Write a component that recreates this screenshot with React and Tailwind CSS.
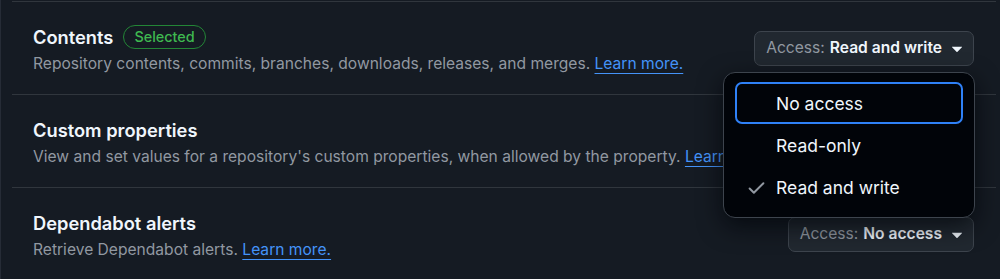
import React from "react";

const FONT = { fontFamily: "Inter, 'Noto Sans', 'Liberation Sans', sans-serif" };

function Caret() {
  return (
    <svg viewBox="0 0 16 16" width="22" height="22" fill="#f0f6fc" className="shrink-0">
      <path d="m4.427 7.427 3.396 3.396a.25.25 0 0 0 .354 0l3.396-3.396A.25.25 0 0 0 11.396 7H4.604a.25.25 0 0 0-.177.427Z" />
    </svg>
  );
}

function Check() {
  return (
    <svg viewBox="0 0 16 16" width="21" height="21" fill="#9198a1" className="shrink-0">
      <path d="M13.78 4.22a.75.75 0 0 1 0 1.06l-7.25 7.25a.75.75 0 0 1-1.06 0L2.22 9.28a.751.751 0 0 1 .018-1.042.751.751 0 0 1 1.042-.018L6 10.94l6.72-6.72a.75.75 0 0 1 1.06 0Z" />
    </svg>
  );
}

function AccessButton({ value }) {
  return (
    <button className="h-[35px] flex items-center pl-[11px] pr-[5px] rounded-[7px] border border-[#3d444d] bg-[#212830] text-[15.6px] whitespace-nowrap">
      <span className="text-[#9198a1]">Access:</span>
      <span className="ml-[5px] font-semibold text-[#f0f6fc]">{value}</span>
      <span className="ml-[4px]"><Caret /></span>
    </button>
  );
}

function Menu() {
  const items = [
    { label: "No access", focus: true },
    { label: "Read-only" },
    { label: "Read and write", checked: true },
  ];
  return (
    <div className="absolute right-[-1px] top-full mt-[6px] w-[252px] rounded-[12px] border border-[#3d444d] bg-[#010409] px-[11px] py-[9px] shadow-[0_8px_24px_rgba(1,4,9,0.7)] z-10">
      {items.map((it) => (
        <div
          key={it.label}
          className={
            "h-[42px] flex items-center pl-[9px] rounded-[7px] border-2 " +
            (it.focus ? "border-[#2f81f7]" : "border-transparent")
          }
        >
          <span className="w-[21px] h-[21px] flex items-center mt-[2px]">{it.checked && <Check />}</span>
          <span className="ml-[9px] pt-[3px] text-[17.5px] text-[#f0f6fc]">{it.label}</span>
        </div>
      ))}
    </div>
  );
}

function Row({ title, badge, desc, value, menu }) {
  return (
    <div className="h-[93px] border-t border-[#30363d] flex items-center justify-between pl-[21px] pr-[22px]">
      <div className="flex flex-col pt-[4px] min-w-0">
        <div className="h-[26px] flex items-center gap-[10px]">
          <h3 className="text-[18.3px] font-semibold text-[#f0f6fc] leading-[26px]">{title}</h3>
          {badge && (
            <span className="h-[24px] px-[10px] flex items-center rounded-full border border-[#238636] text-[14.4px] text-[#3fb950] font-medium">
              {badge}
            </span>
          )}
        </div>
        <p className="mt-[2px] text-[15.6px] leading-[24px] text-[#9198a1] whitespace-nowrap">
          {desc}{" "}
          <a href="#" className="text-[#4493f8] underline underline-offset-[4px]">Learn more.</a>
        </p>
      </div>
      {value && (
        <div className="relative shrink-0">
          <AccessButton value={value} />
          {menu && <Menu />}
        </div>
      )}
    </div>
  );
}

export default function App() {
  return (
    <div style={FONT} className="w-[1000px] h-[279px] bg-[#151b23] overflow-hidden border-l border-[#262c36]">
      <div className="w-[995px] pl-[11px] pt-px">
        <Row
          title="Contents"
          badge="Selected"
          desc="Repository contents, commits, branches, downloads, releases, and merges."
          value="Read and write"
          menu
        />
        <Row
          title="Custom properties"
          desc="View and set values for a repository's custom properties, when allowed by the property."
        />
        <Row
          title="Dependabot alerts"
          desc="Retrieve Dependabot alerts."
          value="No access"
        />
      </div>
    </div>
  );
}
